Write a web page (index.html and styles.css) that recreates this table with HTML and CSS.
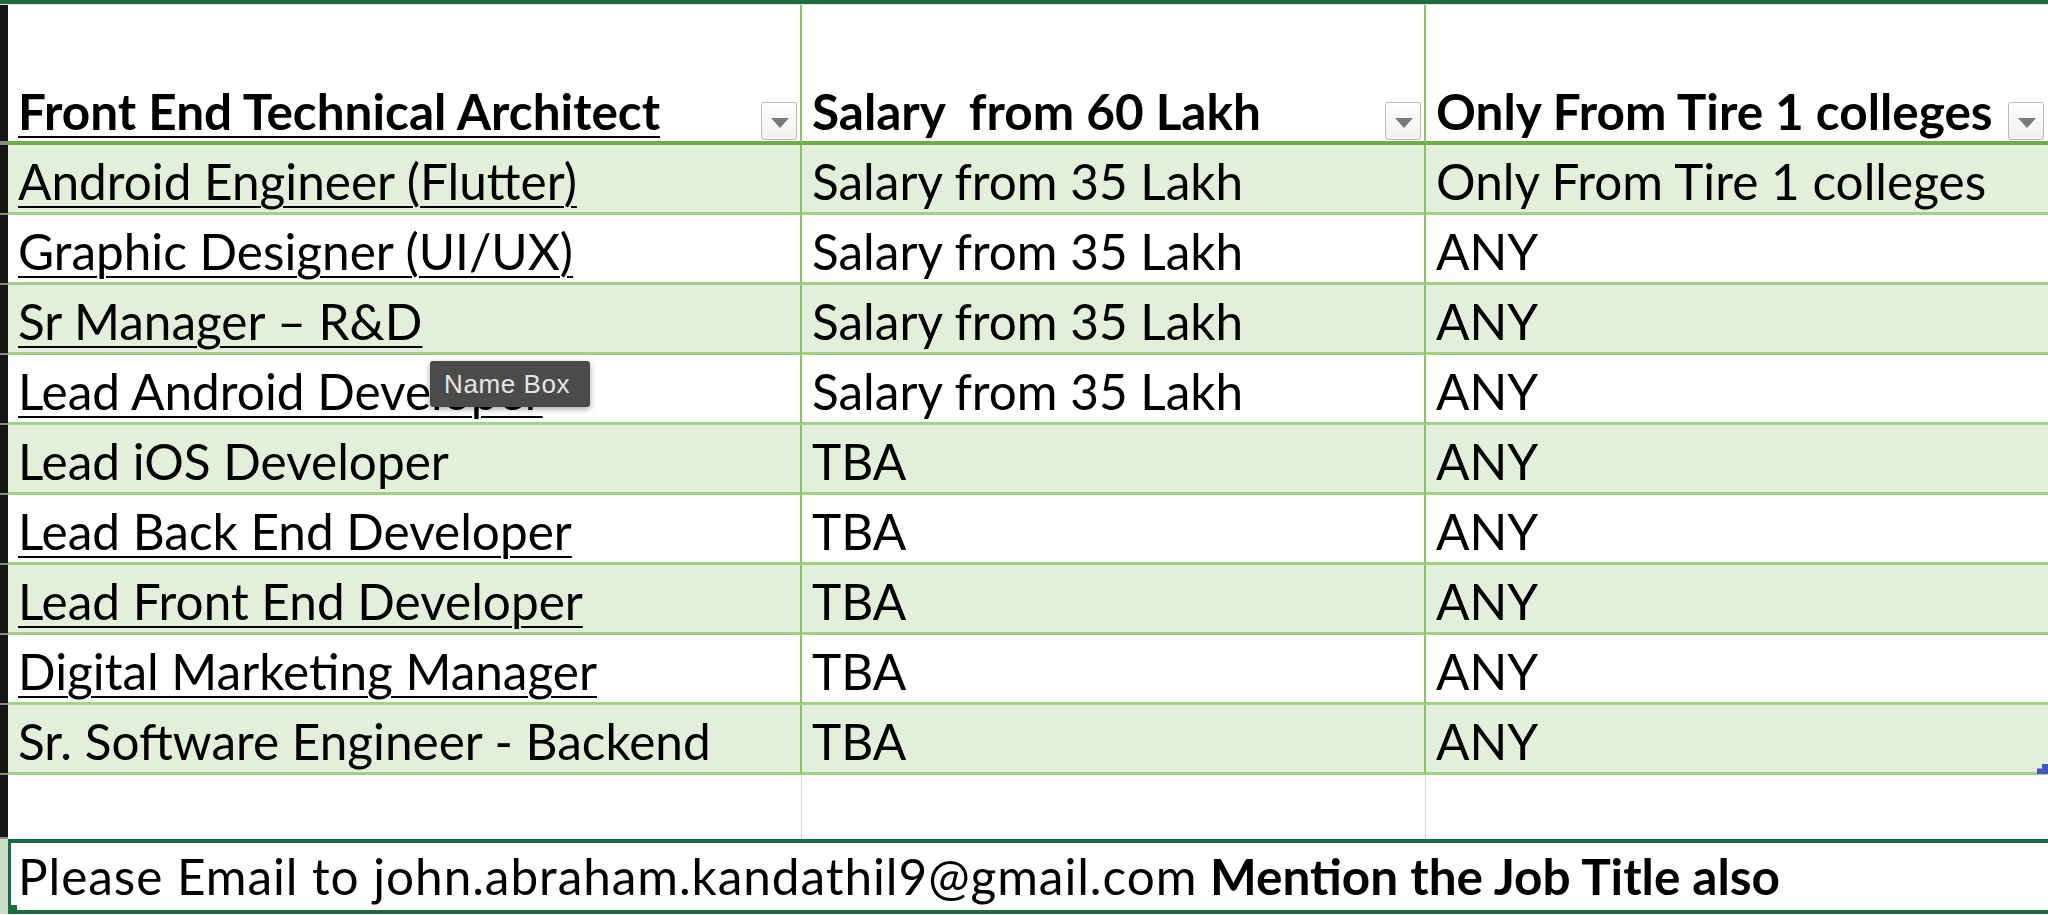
FILE: index.html
```html
<!DOCTYPE html>
<html>
<head>
<meta charset="utf-8">
<link rel="stylesheet" href="styles.css">
</head>
<body>
<div class="sheet">
  <div class="topbar"></div>
  <div class="row head">
    <div class="rh"></div>
    <div class="cell c"><span class="t b u">Front End Technical Architect</span><span class="dd"></span></div>
    <div class="cell c"><span class="t b">Salary&nbsp; from 60 Lakh</span><span class="dd"></span></div>
    <div class="cell last"><span class="t b">Only From Tire 1 colleges</span><span class="dd"></span></div>
  </div>
  <div class="row data band">
    <div class="rh"></div>
    <div class="cell c"><span class="t u">Android Engineer (Flutter)</span></div>
    <div class="cell c"><span class="t">Salary from 35 Lakh</span></div>
    <div class="cell last"><span class="t">Only From Tire 1 colleges</span></div>
  </div>
  <div class="row data">
    <div class="rh"></div>
    <div class="cell c"><span class="t u">Graphic Designer (UI/UX)</span></div>
    <div class="cell c"><span class="t">Salary from 35 Lakh</span></div>
    <div class="cell last"><span class="t">ANY</span></div>
  </div>
  <div class="row data band">
    <div class="rh"></div>
    <div class="cell c"><span class="t u">Sr Manager – R&amp;D</span></div>
    <div class="cell c"><span class="t">Salary from 35 Lakh</span></div>
    <div class="cell last"><span class="t">ANY</span></div>
  </div>
  <div class="row data">
    <div class="rh"></div>
    <div class="cell c tipcell"><span class="t u">Lead Android Developer</span><span class="tip">Name Box</span></div>
    <div class="cell c"><span class="t">Salary from 35 Lakh</span></div>
    <div class="cell last"><span class="t">ANY</span></div>
  </div>
  <div class="row data band">
    <div class="rh"></div>
    <div class="cell c"><span class="t">Lead iOS Developer</span></div>
    <div class="cell c"><span class="t">TBA</span></div>
    <div class="cell last"><span class="t">ANY</span></div>
  </div>
  <div class="row data">
    <div class="rh"></div>
    <div class="cell c"><span class="t u">Lead Back End Developer</span></div>
    <div class="cell c"><span class="t">TBA</span></div>
    <div class="cell last"><span class="t">ANY</span></div>
  </div>
  <div class="row data band">
    <div class="rh"></div>
    <div class="cell c"><span class="t u">Lead Front End Developer</span></div>
    <div class="cell c"><span class="t">TBA</span></div>
    <div class="cell last"><span class="t">ANY</span></div>
  </div>
  <div class="row data">
    <div class="rh"></div>
    <div class="cell c"><span class="t u">Digital Marketing Manager</span></div>
    <div class="cell c"><span class="t">TBA</span></div>
    <div class="cell last"><span class="t">ANY</span></div>
  </div>
  <div class="row data band lastdata">
    <div class="rh"></div>
    <div class="cell c"><span class="t">Sr. Software Engineer - Backend</span></div>
    <div class="cell c"><span class="t">TBA</span></div>
    <div class="cell last"><span class="t">ANY</span><span class="handle"></span></div>
  </div>
  <div class="row empty">
    <div class="rh"></div>
    <div class="cell g"></div>
    <div class="cell g"></div>
    <div class="cell last"></div>
  </div>
  <div class="row email">
    <div class="rh sel"></div>
    <div class="ecell"><span class="t"><span class="mail">Please Email to john.abraham.kandathil9@gmail.com</span> <b>Mention the Job Title also</b></span><span class="corner"></span></div>
  </div>
</div>
</body>
</html>
```
FILE: styles.css
```css
html, body {
  margin: 0;
  padding: 0;
  background: #ffffff;
}
body {
  width: 2048px;
  height: 915px;
  overflow: hidden;
  font-family: "Lato", "Open Sans", sans-serif;
  color: #000;
}
.sheet {
  position: relative;
  display: flex;
  flex-direction: column;
  width: 2048px;
}
.topbar {
  height: 4px;
  background: #1f6b41;
  border-bottom: 1px solid #d8e8d0;
}
.row {
  display: grid;
  grid-template-columns: 8px 794px 624px 1fr;
}
.rh {
  background: #161616;
  border-bottom: 2px solid #8a8a8a;
}
.cell {
  position: relative;
  display: flex;
  align-items: flex-end;
  padding-left: 10px;
  box-sizing: border-box;
}
.cell.c {
  border-right: 2px solid #86c463;
}
.cell.g {
  border-right: 1px solid #d4d4d4;
}
.t {
  font-size: 49.5px;
  line-height: 1;
  white-space: nowrap;
}
.b { font-weight: 700; }
.u {
  text-decoration: underline;
  text-decoration-thickness: 2px;
  text-underline-offset: 6px;
}
.head {
  height: 140px;
}
.head .cell {
  border-bottom: 4px solid #70ad47;
  padding-bottom: 5px;
}
.head .rh {
  border-bottom: 4px solid #8a8a8a;
}
.dd {
  position: absolute;
  right: 3px;
  bottom: 1px;
  width: 36px;
  height: 38px;
  box-sizing: border-box;
  border: 1px solid #b9b9b9;
  border-radius: 3px;
  background: linear-gradient(#ffffff, #f0f0f0);
}
.dd::after {
  content: "";
  position: absolute;
  left: 9px;
  top: 15px;
  border-left: 9px solid transparent;
  border-right: 9px solid transparent;
  border-top: 10px solid #7a7a7a;
}
.head .last .dd { right: 4px; }
.data {
  height: 70px;
}
.data .cell {
  border-bottom: 3px solid #a3d084;
  padding-bottom: 6px;
}
.band .cell {
  background: #e2efda;
}
.empty {
  height: 64px;
}
.email {
  height: 75px;
  grid-template-columns: 8px 1fr;
}
.rh.sel {
  background: #c9dcc4;
  border-bottom: none;
}
.ecell {
  position: relative;
  display: flex;
  align-items: flex-end;
  padding-left: 7px;
  padding-bottom: 9px;
  box-sizing: border-box;
  border-top: 4px solid #1f6b41;
  border-bottom: 4px solid #1f6b41;
  border-left: 3px solid #1f6b41;
}
.mail {
  letter-spacing: 0.95px;
}
.corner {
  position: absolute;
  left: -3px;
  bottom: -4px;
  width: 9px;
  height: 9px;
  background: #1f6b41;
}
.tip {
  position: absolute;
  left: 422px;
  top: 6px;
  width: 160px;
  height: 46px;
  box-sizing: border-box;
  background: #4b4b4b;
  border-radius: 3px;
  box-shadow: 0 2px 6px rgba(0,0,0,0.35);
  color: #e6e6e6;
  font-family: "Liberation Sans", "Roboto", sans-serif;
  font-size: 26px;
  letter-spacing: 0.6px;
  line-height: 46px;
  padding-left: 14px;
}
.handle {
  position: absolute;
  right: 0;
  bottom: -2px;
  width: 11px;
  height: 10px;
  background: #4556c0;
  clip-path: polygon(100% 0, 100% 100%, 0 100%, 0 45%, 45% 45%, 45% 0);
}
```
